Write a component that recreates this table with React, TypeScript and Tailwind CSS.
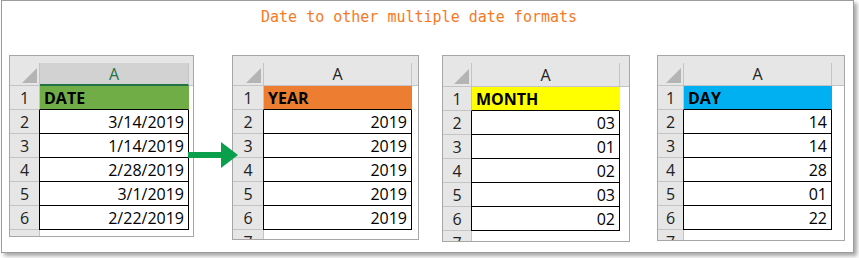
const SHEETS = [
  {
    head: "DATE",
    fill: "bg-[#70ad47]",
    edge: "border-r-[#70ad47]",
    values: ["3/14/2019", "1/14/2019", "2/28/2019", "3/1/2019", "2/22/2019"],
    box: "ml-[7px] w-[185px]",
    corner: "w-[30px]",
    rowHead: "w-[29px]",
    colHead: "w-[149px]",
    cell: "w-[150px]",
    headH: "h-[23px]",
    tail: "h-[6px]",
    selected: true,
  },
  {
    head: "YEAR",
    fill: "bg-[#ed7d31]",
    edge: "border-r-[#ed7d31]",
    values: ["2019", "2019", "2019", "2019", "2019"],
    box: "ml-[38px] w-[187px]",
    corner: "w-[31px]",
    rowHead: "w-[30px]",
    colHead: "w-[148px]",
    cell: "w-[149px]",
    headH: "h-[23px]",
    tail: "h-[9px]",
    selected: false,
  },
  {
    head: "MONTH",
    fill: "bg-[#ffff00]",
    edge: "border-r-[#ffff00]",
    values: ["03", "01", "02", "03", "02"],
    box: "ml-[23px] w-[188px]",
    corner: "w-[29px]",
    rowHead: "w-[28px]",
    colHead: "w-[148px]",
    cell: "w-[149px]",
    headH: "h-[24px]",
    tail: "h-[10px]",
    selected: false,
  },
  {
    head: "DAY",
    fill: "bg-[#00b0f0]",
    edge: "border-r-[#00b0f0]",
    values: ["14", "14", "28", "01", "22"],
    box: "ml-[27px] w-[188px]",
    corner: "w-[26px]",
    rowHead: "w-[25px]",
    colHead: "w-[148px]",
    cell: "w-[149px]",
    headH: "h-[23px]",
    tail: "h-[10px]",
    selected: false,
  },
];

type Sheet = (typeof SHEETS)[number];

const cellFont = "font-['Open_Sans',sans-serif] text-[16px]";

export default function App() {
  return (
    <div className="relative h-[258px] w-[859px] overflow-hidden bg-white">
      <div className="ml-[1px] h-[253px] w-[853px] border border-[#9c9c9c] bg-white shadow-[3px_3px_4px_rgba(0,0,0,0.35)]">
        <p className="pl-[259px] pt-[7px] font-['DejaVu_Sans_Mono',monospace] text-[15px] leading-[18px] text-[#f7791f]">
          Date to other multiple date formats
        </p>

        <div className="mt-[29px] flex items-start">
          {SHEETS.map((s) => (
            <SheetView key={s.head} s={s} />
          ))}
        </div>
      </div>

      {/* Green arrow sits over the second sheet's row headers. */}
      <svg className="absolute left-[188px] top-[142px]" width="50" height="26" viewBox="0 0 50 26" aria-hidden>
        <polygon points="0,10 33,10 33,0 50,13 33,26 33,16 0,16" fill="#0aa04b" />
      </svg>
    </div>
  );
}

function SheetView({ s }: { s: Sheet }) {
  return (
    <div className={`${s.box} shrink-0 overflow-hidden border border-[#a6a6a6] bg-white ${cellFont} leading-none text-[#222]`}>
      <div className="h-[7px] bg-[#e6e6e6]" />

      <div className={`flex ${s.headH} bg-[#e6e6e6]`}>
        <div className={`${s.corner} relative shrink-0 border-b border-r border-[#c4c4c4]`}>
          <svg className="absolute bottom-[2px] right-[2px]" width="15" height="15" viewBox="0 0 15 15" aria-hidden>
            <polygon points="15,0 15,15 0,15" fill="#b4b4b4" />
          </svg>
        </div>
        <div
          className={`${s.colHead} flex shrink-0 items-center justify-center border-r border-[#c4c4c4] ${
            s.selected ? "border-b-2 border-b-[#217346] bg-[#d2d2d2] text-[#217346]" : "border-b border-b-[#c4c4c4]"
          }`}
        >
          A
        </div>
        <div className="flex-1 border-b border-[#c4c4c4]" />
      </div>

      <div className="flex h-[24px]">
        <div className={`${s.rowHead} flex shrink-0 items-center justify-center border-b border-[#c4c4c4] bg-[#e6e6e6]`}>1</div>
        <div
          className={`${s.cell} ${s.fill} flex shrink-0 items-center border-b border-l border-r border-b-black border-l-[#c4c4c4] ${s.edge} pl-[4px] font-bold text-black`}
        >
          {s.head}
        </div>
        <div className="flex-1" />
      </div>

      {s.values.map((v, i) => (
        <div key={i} className="flex h-[24px]">
          <div className={`${s.rowHead} flex shrink-0 items-center justify-center border-b border-[#c4c4c4] bg-[#e6e6e6]`}>
            {i + 2}
          </div>
          <div className={`${s.cell} flex shrink-0 items-center justify-end border-b border-l border-r border-black pr-[4px] text-black`}>
            {v}
          </div>
          <div className="flex-1" />
        </div>
      ))}

      <div className={`flex ${s.tail} overflow-hidden`}>
        <div className={`${s.rowHead} shrink-0 bg-[#e6e6e6]`}>
          <div className="flex h-[24px] items-center justify-center">7</div>
        </div>
        <div className={`${s.cell} shrink-0 border-l border-[#c4c4c4]`} />
        <div className="flex-1" />
      </div>
    </div>
  );
}
